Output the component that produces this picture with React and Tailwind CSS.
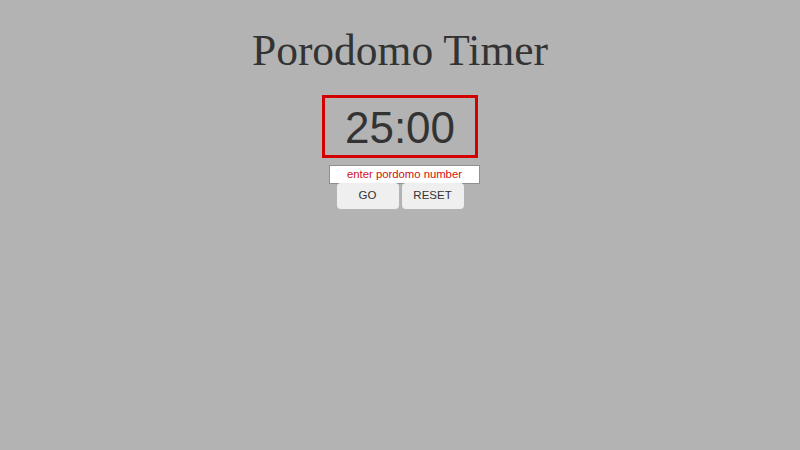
export default function App() {
  return (
    <div className="min-h-[450px] w-full bg-[#b3b3b3] flex flex-col items-center pt-[26px]">
      <h1
        className="text-[43.5px] leading-[48px] text-[#333333]"
        style={{ fontFamily: '"Liberation Serif", "Times New Roman", serif' }}
      >
        Porodomo Timer
      </h1>

      <div className="mt-[21px] w-[156px] h-[63px] border-[3px] border-[#d40000] flex items-center justify-center">
        <span
          className="text-[44px] leading-none text-[#333333] pt-[3px]"
          style={{ fontFamily: '"Liberation Sans", Arial, sans-serif' }}
        >
          25:00
        </span>
      </div>

      <div
        className="mt-[7px] ml-[9px] w-[151px] h-[19px] bg-white border border-[#8f8f8f] flex items-center justify-center text-[11.3px] text-[#cc1111]"
        style={{ fontFamily: '"Liberation Sans", Arial, sans-serif' }}
      >
        enter pordomo number
      </div>

      <div
        className="-mt-px flex gap-[3px] text-[11.5px] text-[#333333]"
        style={{ fontFamily: '"Liberation Sans", Arial, sans-serif' }}
      >
        <button className="w-[62px] h-[26px] bg-[#efefef] rounded-[4px] flex items-center justify-center">
          GO
        </button>
        <button className="w-[62px] h-[26px] bg-[#efefef] rounded-[4px] flex items-center justify-center">
          RESET
        </button>
      </div>
    </div>
  );
}
